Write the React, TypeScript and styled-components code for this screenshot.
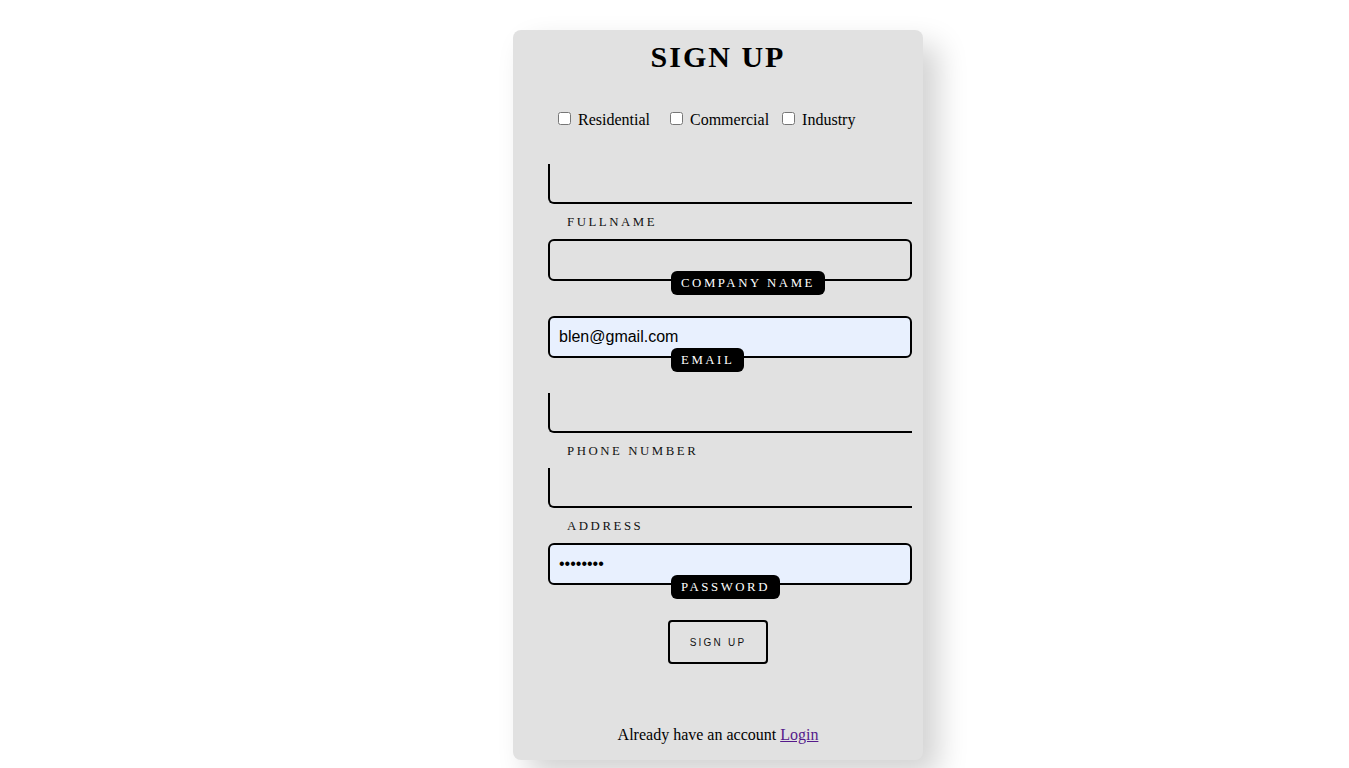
import React from "react";
import styled, { createGlobalStyle } from "styled-components";

const GlobalStyle = createGlobalStyle`
  body {
    margin: 0;
    background: #ffffff;
    font-family: "Liberation Serif", "Times New Roman", serif;
  }
`;

const Page = styled.div`
  min-height: 768px;
  padding: 30px 0 0 513px;
  box-sizing: border-box;
`;

const Card = styled.div`
  width: 410px;
  box-sizing: border-box;
  background: #e1e1e1;
  border-radius: 8px;
  padding: 10px 0 16px;
  box-shadow: 15px 15px 30px rgba(0, 0, 0, 0.18);
  display: flex;
  flex-direction: column;
`;

const Title = styled.h2`
  margin: 0;
  text-align: center;
  font-size: 30px;
  font-weight: bold;
  letter-spacing: 2px;
  color: #000;
  line-height: normal;
`;

const Options = styled.div`
  display: flex;
  align-items: flex-end;
  margin: 37px 0 0 45px;
  font-size: 16px;
`;

const Option = styled.label<{ $space: number }>`
  display: inline-flex;
  align-items: flex-end;
  gap: 7px;
  margin-right: ${(p) => p.$space}px;
  color: #000;
  input {
    margin: 0 0 4px;
    width: 13px;
    height: 13px;
  }
`;

const Fields = styled.div`
  display: flex;
  flex-direction: column;
  gap: 35px;
  margin-top: 35px;
  padding-left: 35px;
`;

const Field = styled.div<{ $filled: boolean }>`
  position: relative;
  width: 364px;
  height: ${(p) => (p.$filled ? 42 : 40)}px;
`;

const Input = styled.input<{ $filled: boolean; $auto: boolean }>`
  width: 100%;
  height: 100%;
  box-sizing: border-box;
  margin: 0;
  padding: 0 9px;
  outline: none;
  font-family: "Liberation Sans", Arial, sans-serif;
  font-size: 16px;
  color: #000;
  background: ${(p) => (p.$auto ? "#e8f0fe" : "transparent")};
  border: 2px solid #000;
  border-radius: 6px;
  ${(p) =>
    !p.$filled &&
    `
    border-top: none;
    border-right: none;
    border-radius: 0 0 0 6px;
  `}
`;

const FloatLabel = styled.span<{ $filled: boolean }>`
  position: absolute;
  font-size: 12.8px;
  letter-spacing: 2.56px;
  text-transform: uppercase;
  white-space: nowrap;
  pointer-events: none;
  ${(p) =>
    p.$filled
      ? `
    left: 123px;
    top: 32px;
    height: 24px;
    line-height: 24px;
    padding: 0 10px;
    background: #000;
    color: #fff;
    border-radius: 6px;
  `
      : `
    left: 19px;
    top: 51px;
    color: #111;
  `}
`;

const Actions = styled.div`
  display: flex;
  justify-content: center;
  margin-top: 35px;
`;

const SubmitButton = styled.button`
  width: 100px;
  height: 44px;
  background: transparent;
  border: 2px solid #000;
  border-radius: 4px;
  font-family: "Liberation Sans", Arial, sans-serif;
  font-size: 10px;
  letter-spacing: 2.2px;
  color: #111;
  cursor: pointer;
`;

const Footer = styled.p`
  margin: 62px 0 0;
  text-align: center;
  font-size: 16px;
  color: #000;
  a {
    color: #551a8b;
    text-decoration: underline;
  }
`;

type FieldDef = {
  label: string;
  type?: string;
  value?: string;
  filled: boolean;
  auto?: boolean;
};

const fields: FieldDef[] = [
  { label: "Fullname", filled: false },
  { label: "Company Name", filled: true },
  { label: "Email", type: "email", value: "blen@gmail.com", filled: true, auto: true },
  { label: "Phone Number", filled: false },
  { label: "Address", filled: false },
  { label: "Password", type: "password", value: "12345678", filled: true, auto: true },
];

export default function App() {
  return (
    <>
      <GlobalStyle />
      <Page>
        <Card>
          <Title>SIGN UP</Title>
          <Options>
            <Option $space={20}>
              <input type="checkbox" />
              Residential
            </Option>
            <Option $space={13}>
              <input type="checkbox" />
              Commercial
            </Option>
            <Option $space={0}>
              <input type="checkbox" />
              Industry
            </Option>
          </Options>
          <Fields>
            {fields.map((f) => (
              <Field key={f.label} $filled={f.filled}>
                <Input
                  type={f.type || "text"}
                  defaultValue={f.value}
                  $filled={f.filled}
                  $auto={!!f.auto}
                />
                <FloatLabel $filled={f.filled}>{f.label}</FloatLabel>
              </Field>
            ))}
          </Fields>
          <Actions>
            <SubmitButton>SIGN UP</SubmitButton>
          </Actions>
          <Footer>
            Already have an account <a href="#login">Login</a>
          </Footer>
        </Card>
      </Page>
    </>
  );
}
